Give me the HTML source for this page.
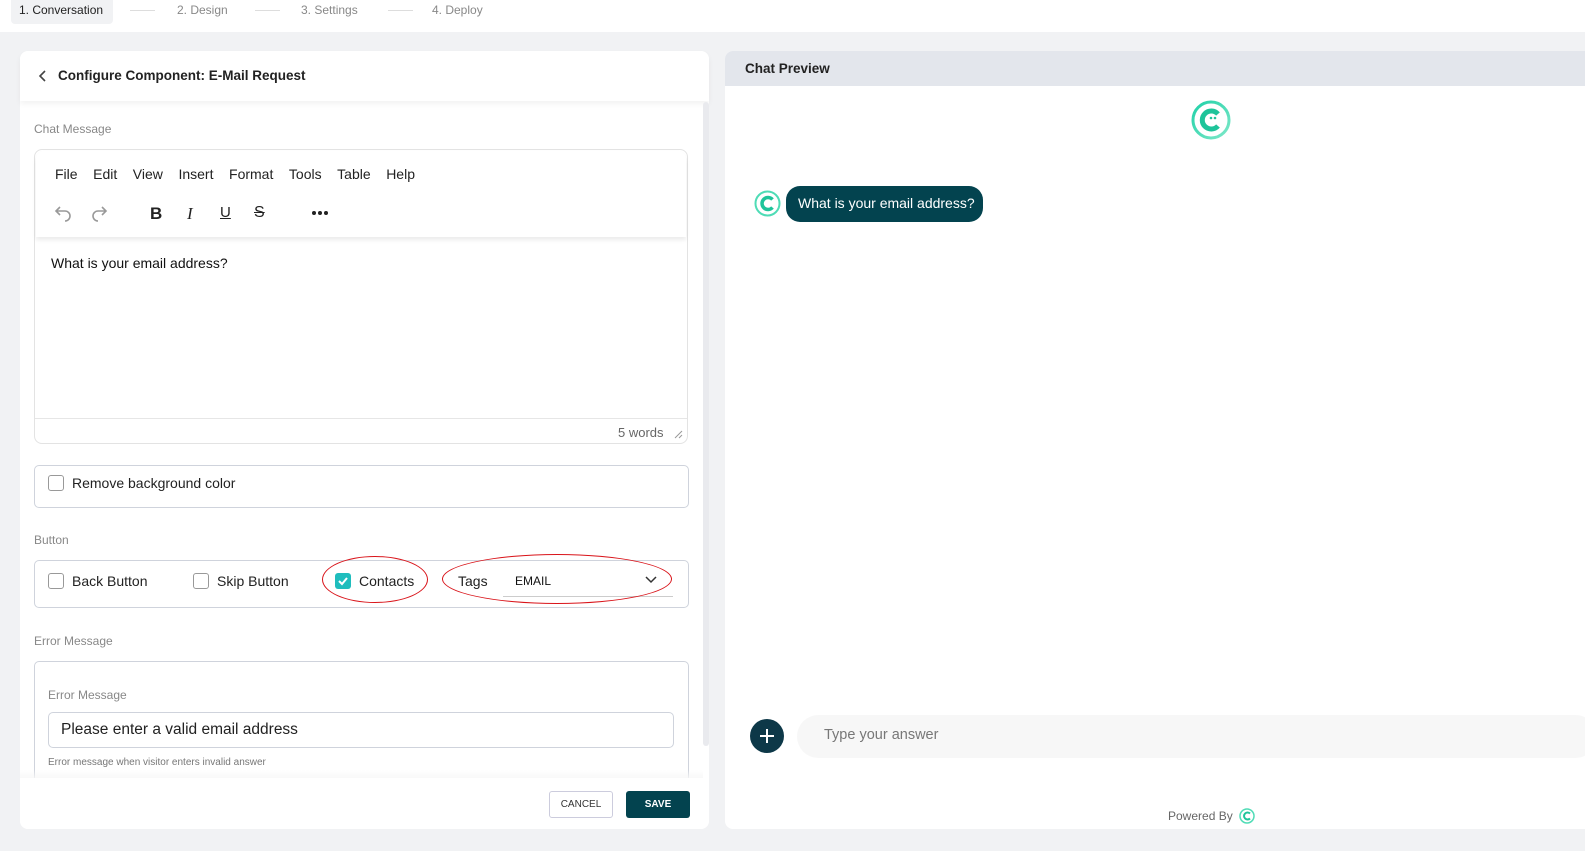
<!DOCTYPE html>
<html><head><meta charset="utf-8"><style>
*{box-sizing:border-box;margin:0;padding:0}
body{width:1585px;height:851px;background:#f1f2f4;font-family:"Liberation Sans",sans-serif;position:relative;overflow:hidden;color:#222}
.a{position:absolute}
.t{font-size:13px;color:#333;white-space:nowrap}
.lbl{font-size:12px;color:#888}
.cb{width:16px;height:16px;border:1px solid #999;border-radius:3px;background:#fff}
.box{border:1px solid #cfd3dc;border-radius:5px;background:#fff}
</style></head><body>
<div class="a" style="left:0;top:0;width:1585px;height:32px;background:#fff"></div>
<div class="a" style="left:11px;top:0;width:102px;height:24px;background:#f1f2f4;border-radius:0 0 4px 4px"></div>
<div class="a t" style="left:19px;top:3px;font-size:12px;color:#222">1. Conversation</div>
<div class="a" style="left:130px;top:10px;width:25px;height:1px;background:#ddd"></div>
<div class="a t" style="left:177px;top:3px;font-size:12px;color:#888">2. Design</div>
<div class="a" style="left:255px;top:10px;width:25px;height:1px;background:#ddd"></div>
<div class="a t" style="left:301px;top:3px;font-size:12px;color:#888">3. Settings</div>
<div class="a" style="left:388px;top:10px;width:25px;height:1px;background:#ddd"></div>
<div class="a t" style="left:432px;top:3px;font-size:12px;color:#888">4. Deploy</div>

<div class="a" style="left:20px;top:51px;width:689px;height:778px;background:#fff;border-radius:8px"></div>
<div class="a" style="left:20px;top:51px;width:689px;height:50px;background:#fff;border-radius:8px 8px 0 0;box-shadow:0 3px 6px rgba(0,0,0,.05)"></div>
<svg class="a" style="left:38px;top:70px" width="10" height="12"><path d="M7 1L2 6l5 5" stroke="#444" stroke-width="1.6" fill="none"/></svg>
<div class="a t" style="left:58px;top:68px;font-size:13.5px;font-weight:bold;color:#222">Configure Component: E-Mail Request</div>
<div class="a" style="left:703px;top:102px;width:6px;height:644px;background:#e9eaee;border-radius:3px"></div>
<div class="a lbl" style="left:34px;top:122px">Chat Message</div>

<div class="a" style="left:34px;top:149px;width:654px;height:295px;border:1px solid #e3e3e3;border-radius:8px;background:#fff"></div>
<div class="a" style="left:36px;top:151px;width:650px;height:86px;background:#fff;box-shadow:0 3px 4px rgba(0,0,0,.08);border-radius:8px 8px 0 0"></div>
<div class="a t" style="left:55px;top:166px;font-size:14px;color:#222">File&nbsp;&nbsp;&nbsp;&nbsp;Edit&nbsp;&nbsp;&nbsp;&nbsp;View&nbsp;&nbsp;&nbsp;&nbsp;Insert&nbsp;&nbsp;&nbsp;&nbsp;Format&nbsp;&nbsp;&nbsp;&nbsp;Tools&nbsp;&nbsp;&nbsp;&nbsp;Table&nbsp;&nbsp;&nbsp;&nbsp;Help</div>
<svg class="a" style="left:54px;top:204px" width="20" height="18"><path d="M6 3L2 7l4 4M2 7h9a5 5 0 0 1 0 10" stroke="#999" stroke-width="1.6" fill="none"/></svg>
<svg class="a" style="left:90px;top:204px" width="20" height="18"><path d="M12 3l4 4-4 4M16 7H8a5 5 0 0 0 0 10" stroke="#999" stroke-width="1.6" fill="none"/></svg>
<div class="a" style="left:150px;top:204px;font-size:17px;font-weight:bold;color:#222">B</div>
<div class="a" style="left:187px;top:204px;font-size:17px;font-style:italic;font-family:'Liberation Serif',serif;color:#222">I</div>
<div class="a" style="left:220px;top:204px;font-size:15px;text-decoration:underline;color:#222">U</div>
<div class="a" style="left:254px;top:204px;font-size:16px;text-decoration:line-through;color:#222">S</div>
<svg class="a" style="left:311px;top:210px" width="18" height="6"><circle cx="3" cy="3" r="2" fill="#222"/><circle cx="9" cy="3" r="2" fill="#222"/><circle cx="15" cy="3" r="2" fill="#222"/></svg>
<div class="a t" style="left:51px;top:255px;font-size:14px;color:#111">What is your email address?</div>
<div class="a" style="left:35px;top:418px;width:652px;height:1px;background:#e6e6e6"></div>
<div class="a t" style="left:618px;top:425px;font-size:13px;color:#666">5 words</div>
<svg class="a" style="left:674px;top:430px" width="9" height="9"><path d="M1 8L8 1M5 8L8 5" stroke="#999" stroke-width="1"/></svg>

<div class="a box" style="left:34px;top:465px;width:655px;height:43px"></div>
<div class="a cb" style="left:48px;top:475px"></div>
<div class="a t" style="left:72px;top:475px;font-size:14px;color:#222">Remove background color</div>

<div class="a lbl" style="left:34px;top:533px">Button</div>
<div class="a box" style="left:34px;top:560px;width:655px;height:48px"></div>
<div class="a cb" style="left:48px;top:573px"></div>
<div class="a t" style="left:72px;top:573px;font-size:14px;color:#222">Back Button</div>
<div class="a cb" style="left:193px;top:573px"></div>
<div class="a t" style="left:217px;top:573px;font-size:14px;color:#222">Skip Button</div>
<div class="a" style="left:335px;top:573px;width:16px;height:16px;background:#1fbdbd;border-radius:3px"></div>
<svg class="a" style="left:335px;top:573px" width="16" height="16"><path d="M4 8l3 3 5-6" stroke="#fff" stroke-width="2" fill="none"/></svg>
<div class="a t" style="left:359px;top:573px;font-size:14px;color:#222">Contacts</div>
<div class="a" style="left:322px;top:556px;width:106px;height:47px;border:1.5px solid #d9141a;border-radius:50%"></div>
<div class="a t" style="left:458px;top:573px;font-size:14px;color:#222">Tags</div>
<div class="a t" style="left:515px;top:574px;font-size:12px;color:#111">EMAIL</div>
<div class="a" style="left:503px;top:596px;width:170px;height:1px;background:#ccc"></div>
<svg class="a" style="left:645px;top:576px" width="12" height="8"><path d="M1 1l5 5 5-5" stroke="#333" stroke-width="1.5" fill="none"/></svg>
<div class="a" style="left:442px;top:554px;width:230px;height:50px;border:1.5px solid #d9141a;border-radius:50%"></div>

<div class="a lbl" style="left:34px;top:634px">Error Message</div>
<div class="a box" style="left:34px;top:661px;width:655px;height:140px"></div>
<div class="a lbl" style="left:48px;top:688px">Error Message</div>
<div class="a box" style="left:48px;top:712px;width:626px;height:36px"></div>
<div class="a t" style="left:61px;top:721px;font-size:15.5px;color:#222">Please enter a valid email address</div>
<div class="a" style="left:48px;top:757px;font-size:10px;color:#777">Error message when visitor enters invalid answer</div>

<div class="a" style="left:20px;top:770px;width:683px;height:10px;background:linear-gradient(rgba(255,255,255,0),#f7f7f7)"></div>
<div class="a" style="left:20px;top:778px;width:689px;height:51px;background:#fff;border-radius:0 0 8px 8px"></div>
<div class="a" style="left:549px;top:791px;width:64px;height:27px;border:1px solid #ccd;border-radius:3px;background:#fff;font-size:10px;color:#333;text-align:center;line-height:25px">CANCEL</div>
<div class="a" style="left:626px;top:791px;width:64px;height:27px;border-radius:3px;background:#03434f;font-size:10px;color:#fff;font-weight:bold;text-align:center;line-height:27px">SAVE</div>

<div class="a" style="left:725px;top:51px;width:860px;height:778px;background:#fff;border-radius:8px 0 0 8px;overflow:hidden">
 <div style="height:35px;background:#e3e6ec"></div>
</div>
<div class="a t" style="left:745px;top:61px;font-size:13.5px;font-weight:bold;color:#222">Chat Preview</div>

<svg class="a" style="left:1191px;top:100px" width="40" height="40"><defs><linearGradient id="g" x1="0" y1="0" x2="1" y2="1"><stop offset="0" stop-color="#1fd1a8"/><stop offset="1" stop-color="#7ee8c8"/></linearGradient></defs><circle cx="20" cy="20" r="18" fill="#fff" stroke="url(#g)" stroke-width="3"/><path d="M27 14a9 9 0 1 0 0 12" stroke="#1ec49a" stroke-width="5" fill="none"/><circle cx="20" cy="18" r="1.3" fill="#1ec49a"/><circle cx="24" cy="18" r="1.3" fill="#1ec49a"/></svg>
<svg class="a" style="left:754px;top:190px" width="27" height="27"><circle cx="13.5" cy="13.5" r="12" fill="#fff" stroke="#4fdcb6" stroke-width="2"/><path d="M18.5 9.5a6 6 0 1 0 0 8" stroke="#1ec49a" stroke-width="3.5" fill="none"/></svg>
<div class="a" style="left:786px;top:186px;width:197px;height:36px;background:#03434f;border-radius:14px;color:#fff;font-size:14px;line-height:35px;padding-left:12px">What is your email address?</div>

<div class="a" style="left:750px;top:719px;width:34px;height:34px;border-radius:50%;background:#0d3848"></div>
<svg class="a" style="left:750px;top:719px" width="34" height="34"><path d="M17 10v14M10 17h14" stroke="#fff" stroke-width="2"/></svg>
<div class="a" style="left:797px;top:715px;width:800px;height:43px;background:#f7f7f7;border-radius:22px"></div>
<div class="a t" style="left:824px;top:727px;font-size:14.5px;color:#777">Type your answer</div>
<div class="a t" style="left:1168px;top:809px;font-size:12px;color:#666">Powered By</div>
<svg class="a" style="left:1239px;top:808px" width="16" height="16"><circle cx="8" cy="8" r="7" fill="#fff" stroke="#4fdcb6" stroke-width="1.5"/><path d="M11 5.5a3.5 3.5 0 1 0 0 5" stroke="#1ec49a" stroke-width="2" fill="none"/></svg>
</body></html>
